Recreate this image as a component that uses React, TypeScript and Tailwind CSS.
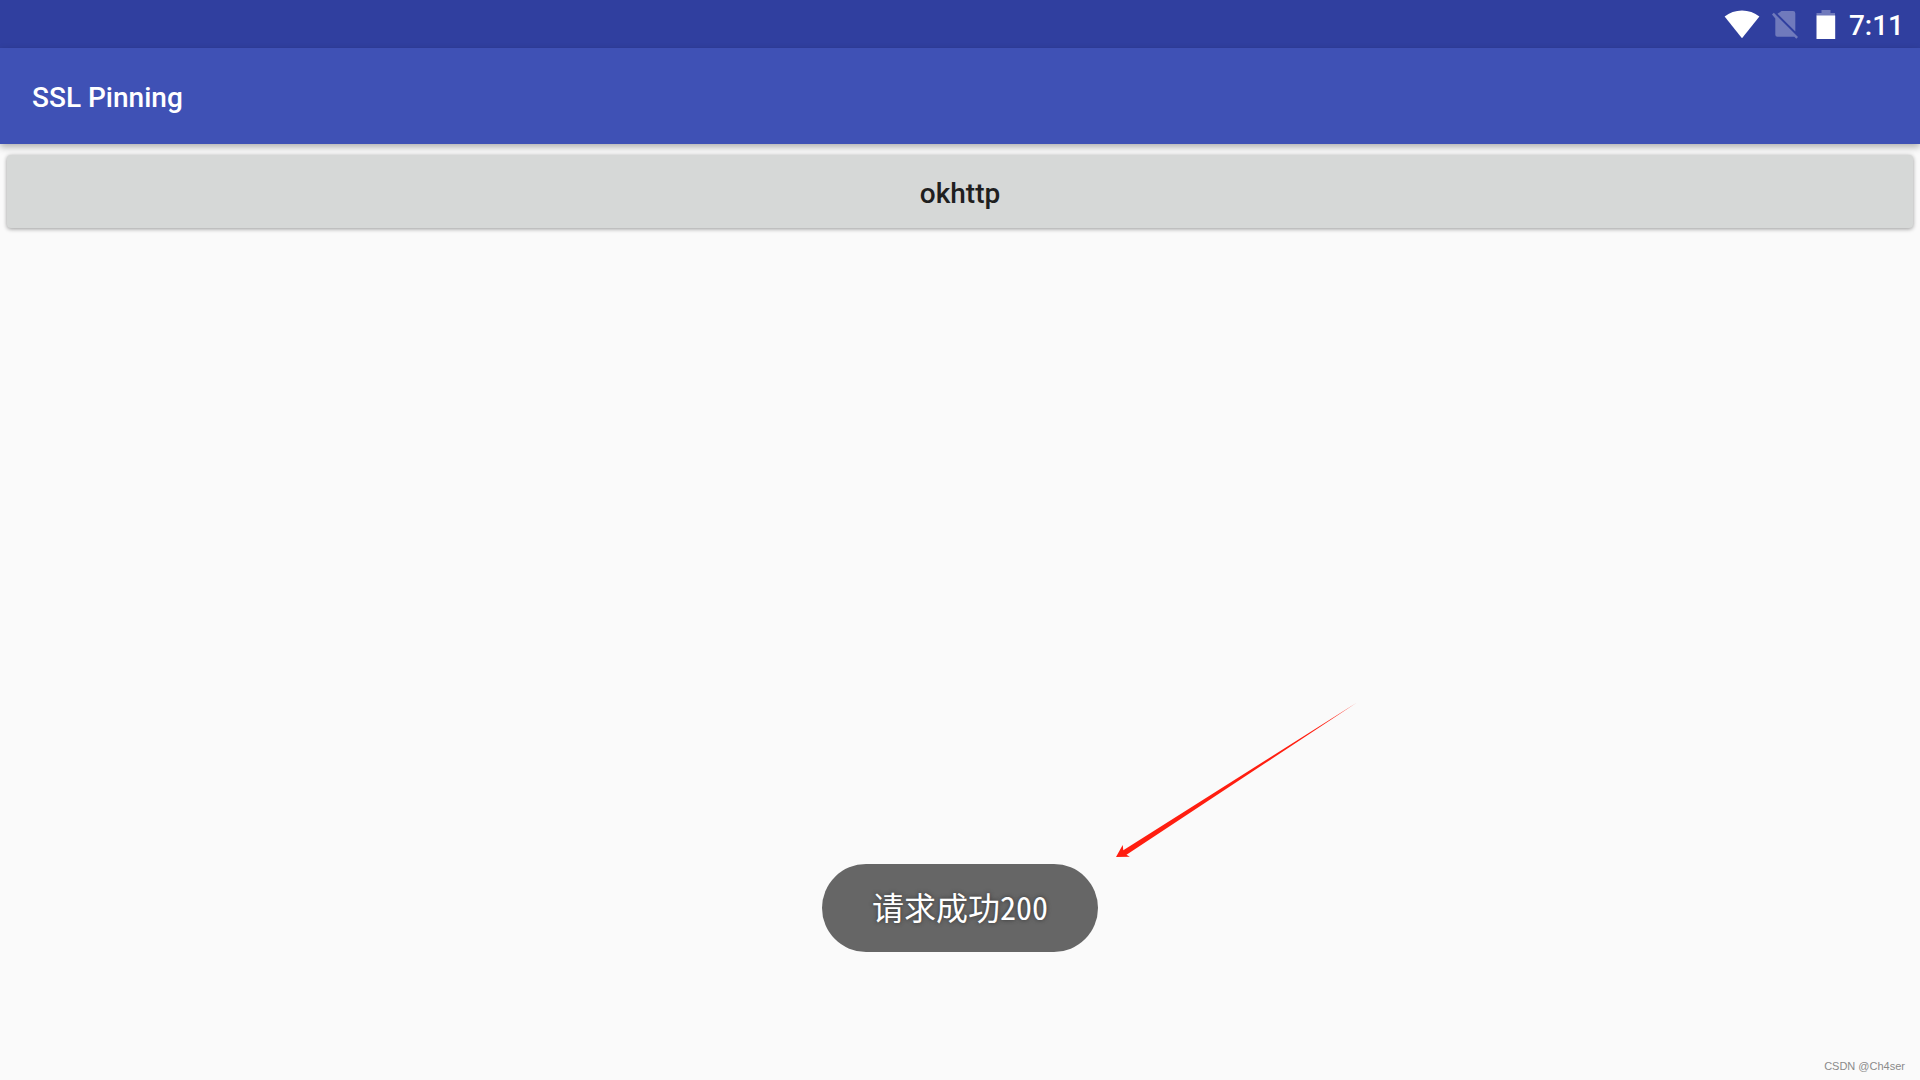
function WifiIcon() {
  return (
    <svg width="36" height="30" viewBox="0 0 36 30" aria-label="Wi-Fi" role="img">
      <path d="M0.6 6.6C5.5 2.4 11.5 0.4 18 0.4s12.500 2 17.400 6.200L18 28.200z" fill="#fff" />
    </svg>
  );
}

function NoSimIcon() {
  return (
    <svg width="26" height="30" viewBox="0 0 26 30" aria-label="No SIM" role="img">
      <g fill="#fff" fillOpacity="0.31">
        <path d="M9.500 1H21a2.300 2.300 0 0 1 2.300 2.300V21.500L5.500 3.800z" />
        <path d="M1.800 2.800L26 27l-1.700 1.700L22.300 26.700H5.300A2 2 0 0 1 3.300 24.700V8.400L0 4.500z" />
      </g>
    </svg>
  );
}

function BatteryIcon() {
  return (
    <svg width="20" height="30" viewBox="0 0 20 30" aria-label="Battery" role="img">
      <path d="M5.500 0h9v3H19v3H0.500V3h5z" fill="#fff" fillOpacity="0.31" />
      <path d="M0.500 5.500H19.200V29H0.500z" fill="#fff" />
    </svg>
  );
}

function Arrow() {
  return (
    <svg
      className="absolute bottom-full left-full mb-1.5 ml-4.5"
      width="242"
      height="156"
      viewBox="0 0 242 156"
      aria-hidden="true"
    >
      <path d="M0 155L6.700 143L7.300 148.200L241 0.500L10.500 152.700L13.800 154.800z" fill="#ff1e10" />
    </svg>
  );
}

export default function App() {
  return (
    <div className="flex min-h-screen flex-col bg-[#fafafa] font-['Roboto',sans-serif]">
      <div className="flex h-12 items-center justify-end bg-[#303f9f] pr-4 text-white">
        <div className="mr-[13px] flex items-center pt-px">
          <WifiIcon />
          <div className="mr-[18px] ml-3 flex">
            <NoSimIcon />
          </div>
          <BatteryIcon />
        </div>
        <time className="pt-1 text-[28px] leading-8 font-medium">7:11</time>
      </div>
      <header className="flex h-24 items-center bg-[#3f51b5] px-8 shadow-[0_3px_7px_rgba(0,0,0,0.3)]">
        <h1 className="pt-1 text-[28px] leading-8 font-medium text-white">SSL Pinning</h1>
      </header>
      <main className="flex flex-1 flex-col px-[7px] pt-[11px]">
        <button
          type="button"
          className="h-[73px] rounded-[4px] bg-[#d6d8d7] pt-1 text-[28px] leading-8 font-medium text-[#1f1f1f] shadow-[0_1px_4px_rgba(0,0,0,0.4)]"
        >
          okhttp
        </button>
        <div className="mt-auto flex justify-center pb-[92px]">
          <div className="relative">
            <div
              role="status"
              className="flex h-[88px] items-center rounded-full bg-[#666666] px-[50px] pb-1 font-['Noto_Sans_Mono_CJK_SC','Noto_Sans_CJK_SC',sans-serif] text-[32px] leading-10 text-white [text-shadow:0_0_4px_#333]"
            >
              请求成功200
            </div>
            <Arrow />
          </div>
        </div>
        <footer className="flex h-9 items-start justify-end pt-4 pr-2 font-['Liberation_Sans',sans-serif] text-[11px] leading-3 text-[#8a8a8a]">
          CSDN @Ch4ser
        </footer>
      </main>
    </div>
  );
}
